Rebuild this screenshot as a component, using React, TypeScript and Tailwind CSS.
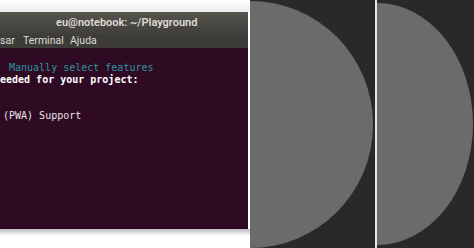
import React from "react";

const mono = { fontFamily: '"DejaVu Sans Mono", "Liberation Mono", monospace' };
const ui = { fontFamily: 'Roboto, "Noto Sans", sans-serif' };

const Terminal: React.FC = () => {
  return (
    <div className="w-[250px] h-full bg-white flex flex-col">
      <div className="h-[12px] bg-gradient-to-b from-white to-[#ececec]" />
      <div className="w-[248px] h-[217px] flex flex-col">
        <div
          className="h-[23px] bg-gradient-to-b from-[#55534e] to-[#3f3e3a] flex items-center pl-[56px] text-[11px] font-semibold text-[#dfdbd2]"
          style={ui}
        >
          eu@notebook: ~/Playground
        </div>
        <div
          className="h-[13px] bg-[#3d3c38] flex items-center text-[10.5px] leading-none text-[#dfdbd2]"
          style={ui}
        >
          <span className="w-[23px]">sar</span>
          <span className="w-[47px]">Terminal</span>
          <span>Ajuda</span>
        </div>
        <div
          className="flex-1 bg-[#2e0a23] pt-[14px] text-[10px] leading-[12px] text-[#e9e4e6]"
          style={mono}
        >
          <div className="pl-[9px] text-[#3393a1]">Manually select features</div>
          <div className="font-bold text-white">eeded for your project:</div>
          <div className="h-[24px]" />
          <div className="pl-[3px]">(PWA) Support</div>
        </div>
      </div>
      <div className="h-[7px] bg-gradient-to-b from-[#bdbdbd] to-white" />
    </div>
  );
};

export default function App() {
  return (
    <div className="w-[474px] h-[248px] flex overflow-hidden bg-white">
      <Terminal />
      <div className="w-[125px] h-full bg-[#292929] flex items-center">
        <div className="w-[123px] h-[247px] rounded-r-full bg-[#6b6b6b]" />
      </div>
      <div className="w-[2px] h-full bg-[#e6e6e6]" />
      <div className="flex-1 h-full bg-[#292929] flex items-center">
        <div className="w-[96px] h-[242px] rounded-tr-[96px_121px] rounded-br-[96px_121px] bg-[#6b6b6b]" />
      </div>
    </div>
  );
}
